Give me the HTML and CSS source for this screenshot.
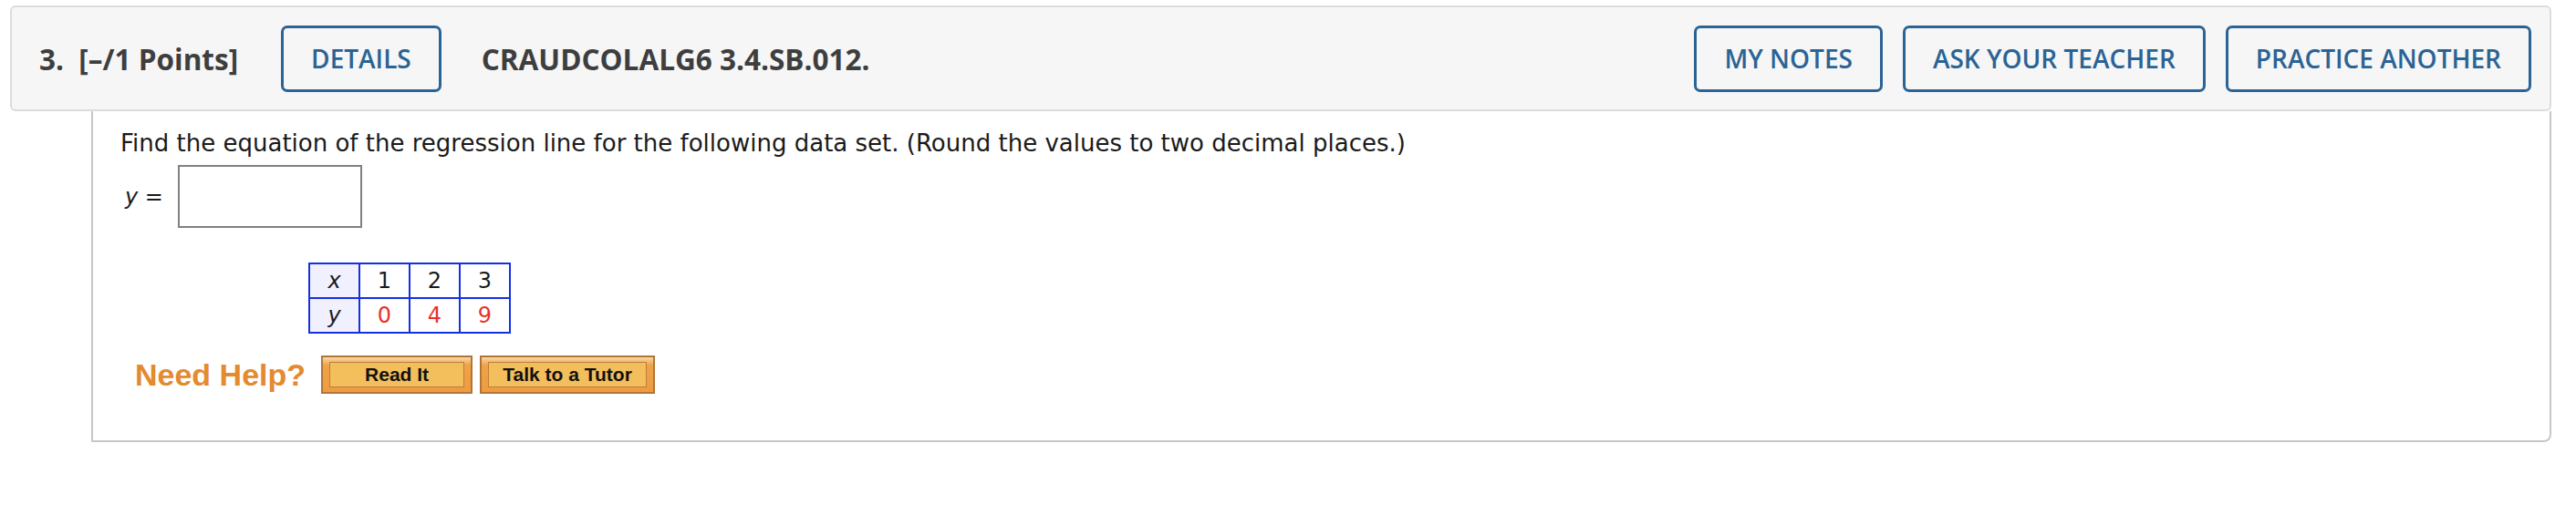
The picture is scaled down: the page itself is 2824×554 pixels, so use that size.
FILE: index.html
```html
<!DOCTYPE html>
<html lang="en">
<head>
    <title>Question 3</title>
    <link rel="stylesheet" href="styles.css">
</head>
<body>
    <div class="question">
        <div class="q-header">
            <span class="q-title">3.&nbsp; [–/1 Points]</span>
            <button class="btn">DETAILS</button>
            <span class="q-code">CRAUDCOLALG6 3.4.SB.012.</span>
            <div class="q-actions">
                <button class="btn">MY NOTES</button>
                <button class="btn">ASK YOUR TEACHER</button>
                <button class="btn">PRACTICE ANOTHER</button>
            </div>
        </div>

        <div class="q-body">
            <p class="prompt">Find the equation of the regression line for the following data set. (Round the values to two decimal places.)</p>
            <div class="answer">
                <span class="answer-label"><span class="var">y</span> =</span>
                <input type="text" class="answer-box">
            </div>

            <table class="data">
                <tr>
                    <th><span class="var">x</span></th>
                    <td>1</td>
                    <td>2</td>
                    <td>3</td>
                </tr>
                <tr>
                    <th><span class="var">y</span></th>
                    <td class="given">0</td>
                    <td class="given">4</td>
                    <td class="given">9</td>
                </tr>
            </table>

            <div class="help">
                <span class="help-label">Need Help?</span>
                <button class="help-btn"><span>Read It</span></button>
                <button class="help-btn wide"><span>Talk to a Tutor</span></button>
            </div>
        </div>
    </div>
</body>
</html>
```

FILE: styles.css
```css
body {
    margin: 0;
    padding: 6px 27px 0 11px;
    background: #fff;
    font-family: "Open Sans", sans-serif;
}
.q-header {
    display: flex;
    align-items: center;
    height: 112px;
    padding: 0 20px 0 30px;
    background-color: #f6f6f6;
    border: 2px solid #dcdcdc;
    border-radius: 6px;
    color: #3e3e3e;
}
.q-title,
.q-code {
    font-size: 31.5px;
    font-weight: 700;
}
.q-header > .btn {
    margin: 0 44px 0 47px;
}
.q-actions {
    display: flex;
    gap: 22px;
    margin-left: auto;
}
.btn {
    height: 73px;
    padding: 0 30px;
    background: transparent;
    border: 3px solid #2a6395;
    border-radius: 7px;
    color: #2a6395;
    font-family: "Open Sans", sans-serif;
    font-size: 28px;
    font-weight: 600;
}
.q-body {
    margin-left: 89px;
    height: 361px;
    padding: 0 30px;
    border: 2px solid #c8c8c8;
    border-top: none;
    border-bottom-right-radius: 8px;
    font-family: Verdana, "DejaVu Sans", sans-serif;
    font-size: 23px;
    color: #1a1a1a;
}
.prompt {
    margin: 0;
    padding-top: 20px;
    font-size: 26px;
    line-height: 30px;
}
.var {
    font-style: italic;
}
.answer {
    display: flex;
    align-items: center;
    gap: 16px;
    margin-top: 9px;
    padding-left: 5px;
}
.answer-label {
    font-size: 24px;
}
.answer-box {
    width: 198px;
    height: 65px;
    margin: 0;
    border: 2px solid #808080;
    box-sizing: content-box;
    padding: 0;
}
.data {
    margin: 38px 0 0 206px;
    border-collapse: collapse;
    border: 2px solid #1530e0;
}
.data th,
.data td {
    width: 53px;
    height: 36px;
    padding: 0;
    border: 2px solid #1530e0;
    text-align: center;
    font-weight: normal;
    font-size: 24px;
}
.data th {
    background-color: #f0f0ff;
}
.data .given {
    color: #e8322a;
}
.help {
    display: flex;
    align-items: center;
    margin-top: 24px;
    padding-left: 16px;
}
.help-label {
    margin-right: 17px;
    font-family: "Liberation Sans", Arial, sans-serif;
    font-size: 34px;
    font-weight: 700;
    color: #e48a2f;
}
.help-btn {
    width: 166px;
    height: 42px;
    margin-right: 8px;
    padding: 4px 7px;
    background: linear-gradient(#f8d9a4 0, #efa349 22%, #ed9c40 100%);
    border: 2px solid #b07639;
    font-family: "Liberation Sans", Arial, sans-serif;
}
.help-btn.wide {
    width: 192px;
}
.help-btn span {
    display: block;
    height: 26px;
    line-height: 26px;
    background-color: #f3be5c;
    border: 1px solid #c07c3a;
    color: #111;
    font-size: 21px;
    font-weight: 700;
}
```
